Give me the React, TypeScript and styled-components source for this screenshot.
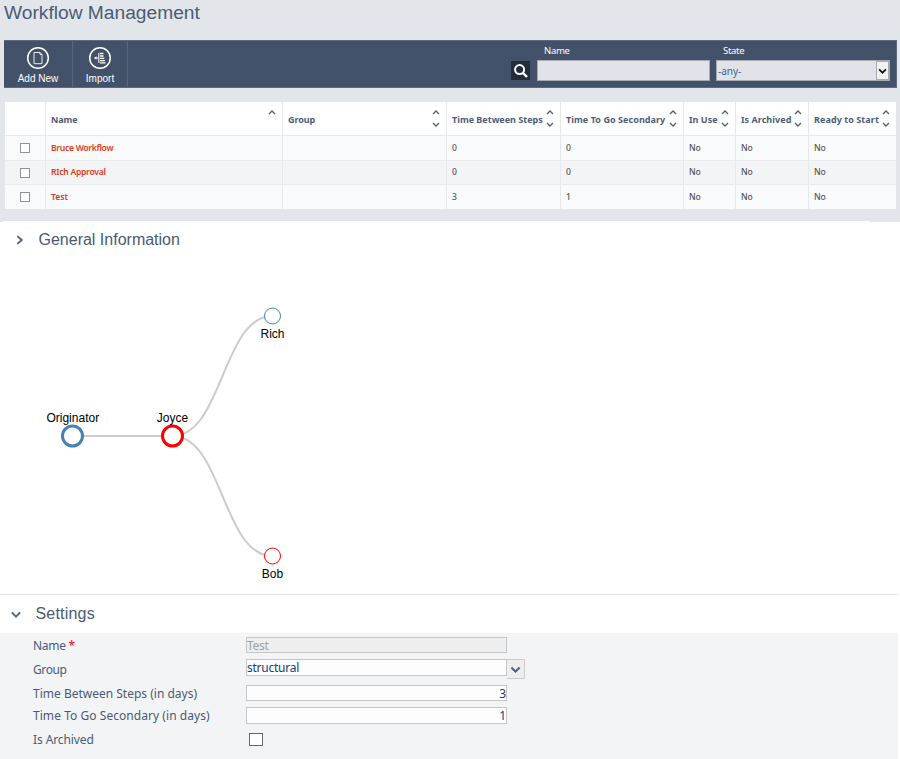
import React from "react";
import styled, { createGlobalStyle } from "styled-components";

const GlobalStyle = createGlobalStyle`
  * { box-sizing: border-box; }
  body {
    margin: 0;
    background: #fff;
    color: #45556e;
    font-family: "Noto Sans", Tahoma, sans-serif;
  }
  svg { display: block; flex: none; }
`;

const Page = styled.div`
  width: 900px;
  height: 759px;
  overflow: hidden;
  background: #fff;
`;

const TopArea = styled.header`
  height: 222px;
  padding: 0 3px 0 4px;
  background:
    linear-gradient(#fff, #fff) 3px 221px / 867px 1px no-repeat,
    #e2e5ea;
  display: flex;
  flex-direction: column;
`;

const Title = styled.h1`
  margin: 0;
  height: 40px;
  padding-top: 1px;
  font: 400 19.2px/23px "Liberation Sans", Arial, sans-serif;
  letter-spacing: 0;
  color: #4b5c75;
`;

const Toolbar = styled.div`
  height: 48px;
  display: flex;
  flex: none;
  color: #fff;
  border: 1px solid #5c6b80;
  border-left: 0;
  background: repeating-conic-gradient(#415068 0 25%, #44536a 0 50%) 0 0 / 4px 4px;
`;

const ToolButton = styled.button<{ $width: number }>`
  width: ${(p) => p.$width}px;
  height: 46px;
  padding: 5px 0 0;
  border: 0;
  border-right: 1px solid #56657b;
  background: none;
  color: #fff;
  display: flex;
  flex-direction: column;
  align-items: center;
  gap: 2px;
  font: 400 10px/13px "Liberation Sans", Arial, sans-serif;
`;

const Filters = styled.div`
  margin-left: auto;
  padding: 4px 6px 0 0;
  display: flex;
  align-items: flex-start;
`;

const SearchButton = styled.button`
  width: 19px;
  height: 19px;
  margin: 16px 7px 0 0;
  padding: 0;
  border: 0;
  background: #222c3b;
  display: grid;
  place-items: center;
`;

const Filter = styled.div<{ $width: number }>`
  width: ${(p) => p.$width}px;
  margin-right: ${(p) => (p.$width === 173 ? 6 : 0)}px;
`;

const FilterLabel = styled.label`
  display: block;
  height: 15px;
  padding-left: 7px;
  font-size: 9.5px;
  line-height: 12px;
  letter-spacing: -0.3px;
`;

const FilterBox = styled.div`
  height: 21px;
  border: 1px solid #a5abb3;
  background: #e1e3e8;
  display: flex;
  align-items: center;
  justify-content: space-between;
  padding: 1px 0 0 1px;
  color: #41638a;
  font-size: 10px;
`;

const SelectArrow = styled.span`
  width: 13px;
  height: 19px;
  margin-top: -1px;
  border: 1px solid #aaa;
  background: #f1f1f1;
  display: grid;
  place-items: center;
`;

const Table = styled.div`
  margin: 14px 1px 0;
  width: 891px;
`;

const Row = styled.div<{ $kind: "head" | "light" | "dark"; $height: number }>`
  height: ${(p) => p.$height}px;
  display: grid;
  grid-template-columns: 41px 237px 164px 114px 123px 52px 73px 87px;
  background: ${(p) => (p.$kind === "head" ? "#fff" : p.$kind === "dark" ? "#f3f4f6" : "#f9fafc")};
  border-bottom: 1px solid #e8eaed;
  &:last-child { border-bottom: 0; }
`;

const Cell = styled.div`
  min-width: 0;
  padding: 0 0 1px 5px;
  display: flex;
  align-items: center;
  border-right: 1px solid #e6e8eb;
  font-size: 8.6px;
  font-weight: 500;
  color: #555;
  white-space: nowrap;
  letter-spacing: -0.2px;
  &:first-child { padding: 0 0 0 15px; }
  &:last-child { border-right: 0; }
`;

const HeadCell = styled(Cell)`
  padding-top: 3px;
  justify-content: space-between;
  padding-right: 6px;
  font-size: 9px;
  font-weight: 700;
  color: #4b5d78;
`;

const HeadText = styled.span<{ $spacing: number }>`
  letter-spacing: ${(p) => p.$spacing}px;
`;

const NameLink = styled.a<{ $spacing: number }>`
  color: #dc3b26;
  font-weight: 600;
  letter-spacing: ${(p) => p.$spacing}px;
`;

const TinyCheck = styled.span`
  width: 10px;
  height: 10px;
  background: #fff;
  border: 1px solid #929292;
`;

const SectionHead = styled.div<{ $height: number; $indent: number; $gap: number }>`
  height: ${(p) => p.$height}px;
  padding-left: ${(p) => p.$indent}px;
  display: flex;
  align-items: center;
  gap: ${(p) => p.$gap}px;
  color: #4a5a74;
  font: 400 16px/20px "Liberation Sans", Arial, sans-serif;
`;

const Diagram = styled.svg`
  font: 400 12px "Liberation Sans", Arial, sans-serif;
  fill: #000;
`;

const SettingsHead = styled(SectionHead)`
  width: 898px;
  border-top: 1px solid #e2e3e5;
  letter-spacing: 0.2px;
`;

const Form = styled.form`
  width: 898px;
  height: 126px;
  padding: 2px 0 0 33px;
  background: #f3f4f6;
`;

const Field = styled.div<{ $height: number }>`
  height: ${(p) => p.$height}px;
  display: grid;
  grid-template-columns: 213px 279px;
  align-items: start;
  font-size: 12px;
  line-height: 22px;
`;

const FieldLabel = styled.label<{ $spacing: number }>`
  letter-spacing: ${(p) => p.$spacing}px;
  color: #4a5a74;
  white-space: nowrap;
`;

const Required = styled.span`
  color: #f00;
  margin-left: 0;
`;

const InputBox = styled.div<{ $disabled?: boolean; $right?: boolean; $tall?: boolean }>`
  width: 261px;
  height: ${(p) => (p.$tall ? 17 : 16)}px;
  border: 1px solid #c5c6c8;
  background: ${(p) => (p.$disabled ? "#eee" : "#fdfdfd")};
  color: ${(p) => (p.$disabled ? "#98a5ab" : "#173f6d")};
  text-align: ${(p) => (p.$right ? "right" : "left")};
  padding-right: 0;
  line-height: 16px;
  letter-spacing: ${(p) => (p.$right ? 0 : -0.25)}px;
`;

const Control = styled.div<{ $top: number }>`
  padding-top: ${(p) => p.$top}px;
  display: flex;
`;

const DropButton = styled.span`
  width: 18px;
  height: 20px;
  background: #eee;
  border: 1px solid #ccc;
  border-left: 0;
  display: grid;
  place-items: center;
`;

const CheckBox = styled.span`
  width: 14px;
  height: 13px;
  margin-left: 3px;
  border: 1px solid #666;
  background: #fff;
`;

type Dir = "up" | "down" | "right";

const paths: Record<Dir, string> = {
  up: "M1 4 L4 1 L7 4",
  down: "M1 1 L4 4 L7 1",
  right: "M1 1 L5 4.5 L1 8",
};

function Chevron({ dir, width, height, color = "#52637b", stroke = 1.4 }: {
  dir: Dir; width: number; height: number; color?: string; stroke?: number;
}) {
  return (
    <svg width={width} height={height} viewBox={dir === "right" ? "0 0 6 9" : "0 0 8 5"} fill="none">
      <path d={paths[dir]} stroke={color} strokeWidth={stroke} />
    </svg>
  );
}

const SortStack = styled.span`
  height: 17px;
  margin-top: -3px;
  display: flex;
  flex-direction: column;
  justify-content: space-between;
`;

const columns = [
  { title: "Name", spacing: -0.1 },
  { title: "Group", spacing: -0.1 },
  { title: "Time Between Steps", spacing: 0 },
  { title: "Time To Go Secondary", spacing: 0.06 },
  { title: "In Use", spacing: 0.05 },
  { title: "Is Archived", spacing: 0.05 },
  { title: "Ready to Start", spacing: 0.07 },
];

const rows = [
  { name: "Bruce Workflow", spacing: -0.3, steps: 0, secondary: 0, height: 25 },
  { name: "RIch Approval", spacing: -0.27, steps: 0, secondary: 0, height: 24 },
  { name: "Test", spacing: 0, steps: 3, secondary: 1, height: 24 },
];

export default function App() {
  return (
    <>
      <GlobalStyle />
      <Page>
        <TopArea>
          <Title>Workflow Management</Title>
          <Toolbar>
            <ToolButton $width={69}>
              <svg width="24" height="24" viewBox="0 0 24 24" fill="none" stroke="#fff">
                <circle cx="12" cy="12" r="10.3" strokeWidth="1.5" />
                <path d="M8 6.5h6l2 2v9.2H8z M14 6.5v2h2" strokeWidth="0.9" />
              </svg>
              Add New
            </ToolButton>
            <ToolButton $width={55}>
              <svg width="24" height="24" viewBox="0 0 24 24" fill="none" stroke="#fff">
                <circle cx="12" cy="12" r="10.3" strokeWidth="1.5" />
                <path d="M6.5 12h4M10.8 7v10" />
                <path d="M6.3 12l2.2-1.8v3.6z" fill="#fff" stroke="none" />
                <path d="M12 7.5h3.5M12 10h3.5M12 12.3h4.3M12 14.6h5M12 16.8h5.5" strokeWidth="1.3" />
              </svg>
              Import
            </ToolButton>
            <Filters>
              <SearchButton type="button">
                <svg width="17" height="17" viewBox="0 0 17 17" fill="none" stroke="#fff">
                  <circle cx="7.6" cy="7.6" r="4.5" strokeWidth="2" />
                  <path d="M11 11l4 4" strokeWidth="2.4" />
                </svg>
              </SearchButton>
              <Filter $width={173}>
                <FilterLabel>Name</FilterLabel>
                <FilterBox />
              </Filter>
              <Filter $width={174}>
                <FilterLabel>State</FilterLabel>
                <FilterBox>
                  -any-
                  <SelectArrow><Chevron dir="down" width={9} height={6} color="#111" stroke={1.5} /></SelectArrow>
                </FilterBox>
              </Filter>
            </Filters>
          </Toolbar>
          <Table>
            <Row $kind="head" $height={34}>
              <HeadCell />
              {columns.map((c, i) => (
                <HeadCell key={c.title}>
                  <HeadText $spacing={c.spacing}>{c.title}</HeadText>
                  <SortStack>
                    <Chevron dir="up" width={8} height={5} />
                    {i > 0 && <Chevron dir="down" width={8} height={5} />}
                  </SortStack>
                </HeadCell>
              ))}
            </Row>
            {rows.map((r, i) => (
              <Row key={r.name} $kind={i % 2 ? "dark" : "light"} $height={r.height}>
                <Cell><TinyCheck /></Cell>
                <Cell><NameLink $spacing={r.spacing}>{r.name}</NameLink></Cell>
                <Cell />
                <Cell>{r.steps}</Cell>
                <Cell>{r.secondary}</Cell>
                <Cell>No</Cell>
                <Cell>No</Cell>
                <Cell>No</Cell>
              </Row>
            ))}
          </Table>
        </TopArea>
        <SectionHead $height={35} $indent={16} $gap={15.5}>
          <Chevron dir="right" width={7} height={10} stroke={1.7} />
          General Information
        </SectionHead>
        <Diagram width="900" height="337" viewBox="0 257 900 337">
          <g fill="none" stroke="#ccc" strokeWidth="2">
            <path d="M72.5 436H172.5" />
            <path d="M172.5 436C222.5 436 222.5 316 272.5 316" />
            <path d="M172.5 436C222.5 436 222.5 556 272.5 556" />
          </g>
          <g fill="#fff">
            <circle cx="72.5" cy="436" r="10" stroke="steelblue" strokeWidth="3" />
            <circle cx="172.5" cy="436" r="10" stroke="red" strokeWidth="3" />
            <circle cx="272.5" cy="316" r="8" stroke="steelblue" />
            <circle cx="272.5" cy="556" r="8" stroke="red" />
          </g>
          <g textAnchor="middle">
            <text x="72.8" y="422">Originator</text>
            <text x="172.5" y="422">Joyce</text>
            <text x="272.5" y="338">Rich</text>
            <text x="272.5" y="578">Bob</text>
          </g>
        </Diagram>
        <SettingsHead $height={39} $indent={10} $gap={13.5}>
          <Chevron dir="down" width={12} height={7} stroke={1.4} />
          Settings
        </SettingsHead>
        <Form>
          <Field $height={24}>
            <FieldLabel $spacing={-0.3}>Name <Required>*</Required></FieldLabel>
            <Control $top={2}><InputBox $disabled>Test</InputBox></Control>
          </Field>
          <Field $height={24}>
            <FieldLabel $spacing={-0.4}>Group</FieldLabel>
            <Control $top={0}>
              <InputBox $tall>structural</InputBox>
              <DropButton><Chevron dir="down" width={11} height={7} stroke={1.5} /></DropButton>
            </Control>
          </Field>
          <Field $height={22}>
            <FieldLabel $spacing={0}>Time Between Steps (in days)</FieldLabel>
            <Control $top={2}><InputBox $right>3</InputBox></Control>
          </Field>
          <Field $height={24}>
            <FieldLabel $spacing={0.05}>Time To Go Secondary (in days)</FieldLabel>
            <Control $top={2}><InputBox $right $tall>1</InputBox></Control>
          </Field>
          <Field $height={24}>
            <FieldLabel $spacing={-0.1}>Is Archived</FieldLabel>
            <Control $top={4}><CheckBox /></Control>
          </Field>
        </Form>
      </Page>
    </>
  );
}
